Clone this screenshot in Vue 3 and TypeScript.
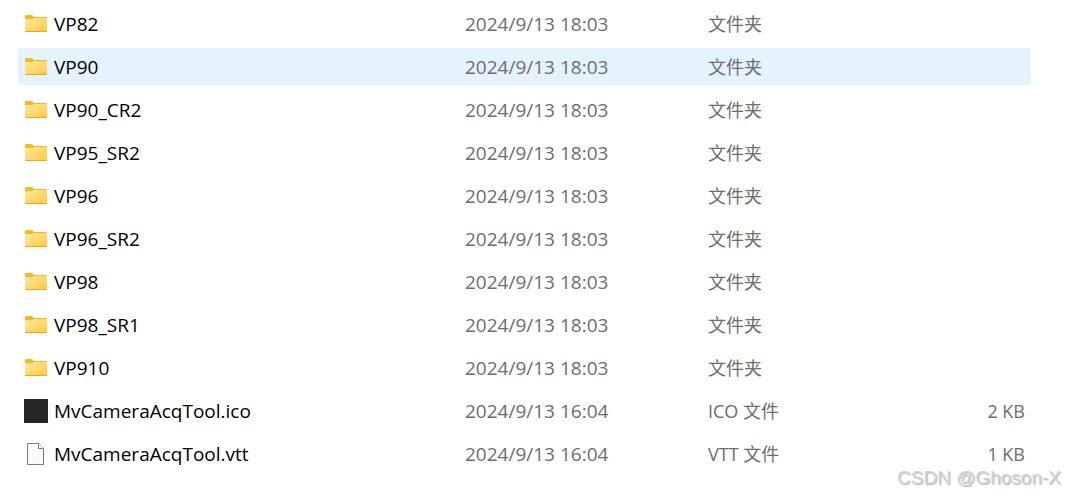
<script setup lang="ts">
type Kind = 'folder' | 'ico' | 'file'

interface Entry {
  name: string
  date: string
  type: string
  size: string
  kind: Kind
}

const folderNames: string[] = [
  'VP82', 'VP90', 'VP90_CR2', 'VP95_SR2', 'VP96', 'VP96_SR2', 'VP98', 'VP98_SR1', 'VP910',
]

const entries: Entry[] = [
  ...folderNames.map((name): Entry => ({
    name, date: '2024/9/13 18:03', type: '文件夹', size: '', kind: 'folder',
  })),
  { name: 'MvCameraAcqTool.ico', date: '2024/9/13 16:04', type: 'ICO 文件', size: '2 KB', kind: 'ico' },
  { name: 'MvCameraAcqTool.vtt', date: '2024/9/13 16:04', type: 'VTT 文件', size: '1 KB', kind: 'file' },
]

const hovered = 'VP90'
</script>

<template>
  <main class="explorer">
    <svg class="defs" width="0" height="0" aria-hidden="true">
      <defs>
        <linearGradient id="folder-face" x1="0" y1="0" x2="1" y2="1">
          <stop offset="0" stop-color="#ffe9a6" />
          <stop offset="1" stop-color="#ffca3e" />
        </linearGradient>
      </defs>
    </svg>
    <table class="files">
      <colgroup>
        <col class="col-name" />
        <col class="col-date" />
        <col class="col-type" />
        <col class="col-size" />
      </colgroup>
      <tbody>
        <tr v-for="entry in entries" :key="entry.name" :class="{ hovered: entry.name === hovered }">
          <td>
            <div class="name">
              <svg v-if="entry.kind === 'folder'" class="icon" viewBox="0 0 24 24" aria-hidden="true">
                <path d="M1 5.5V4.200Q1 3 2.200 3H7.500Q8.300 3 8.700 3.600L9.800 5H22Q23 5 23 6V9H1Z" fill="#f6b81c" />
                <path d="M1 7H7.600Q8.400 7 9 6.500L9.600 6H23V19H1Z" fill="url(#folder-face)" />
                <path d="M1 19H23V19.200Q23 20 22.200 20H1.800Q1 20 1 19.200Z" fill="#e9a521" />
              </svg>
              <svg v-else-if="entry.kind === 'ico'" class="icon" viewBox="0 0 24 24" aria-hidden="true">
                <rect width="24" height="24" fill="#262626" />
              </svg>
              <svg v-else class="icon" viewBox="0 0 24 24" aria-hidden="true">
                <path d="M3.500 1.500H14.500L19.500 6.500V22.500H3.500Z" fill="#fafafa" stroke="#7a7a76" />
                <path d="M14.500 1.500V6.500H19.500" fill="#fff" stroke="#7a7a76" />
              </svg>
              <span>{{ entry.name }}</span>
            </div>
          </td>
          <td class="muted date">{{ entry.date }}</td>
          <td class="muted">{{ entry.type }}</td>
          <td class="muted size">{{ entry.size }}</td>
        </tr>
      </tbody>
    </table>
    <p class="watermark">CSDN @Ghoson-X</p>
  </main>
</template>

<style>
body {
  margin: 0;
  background: #fff;
}
</style>

<style scoped>
.explorer {
  position: relative;
  box-sizing: border-box;
  min-height: 100vh;
  overflow: hidden;
  padding: 0 34px 0 18px;
  font-family: "Open Sans", "Noto Sans CJK SC", sans-serif;
  font-size: 18px;
  line-height: 24px;
  color: #000;
}

.defs {
  position: absolute;
}

.files {
  width: 100%;
  margin-top: -1px;
  table-layout: fixed;
  border-collapse: separate;
  border-spacing: 0 6px;
}

.col-name {
  width: 447px;
}

.col-date {
  width: 243px;
}

.col-size {
  width: 120px;
}

td {
  height: 37px;
  padding: 0;
  white-space: nowrap;
}

.name {
  display: flex;
  align-items: center;
  gap: 6px;
  padding-left: 6px;
  font-size: 19px;
}

.icon {
  flex: none;
  width: 24px;
  height: 24px;
}

.muted {
  color: #6d6d6d;
}

.date {
  font-size: 19px;
}

.size {
  padding-right: 6px;
  text-align: right;
}

.hovered td {
  background: #e5f3ff;
}

.hovered td:first-child {
  border-radius: 2px 0 0 2px;
}

.hovered td:last-child {
  border-radius: 0 2px 2px 0;
}

.watermark {
  position: absolute;
  right: 4px;
  bottom: 5px;
  margin: 0;
  font-family: "Liberation Sans", Arial, sans-serif;
  font-size: 19px;
  line-height: 24px;
  color: #d4d4d4;
  text-shadow: 1px 1px 1px #b4b4b4;
}
</style>
